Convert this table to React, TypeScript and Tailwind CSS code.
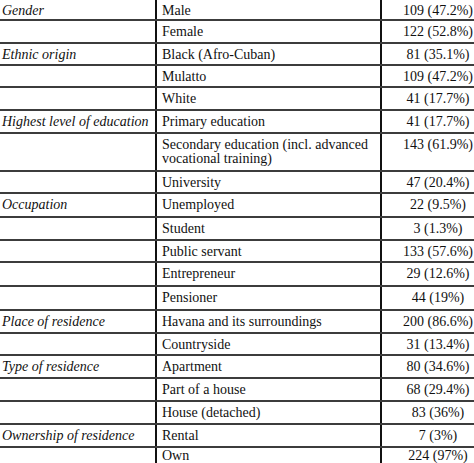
import React from "react";

type Row = { label?: string; cat: string; cat2?: string; value: string; h: string; pt?: string };

const rows: Row[] = [
  { label: "Gender", cat: "Male", value: "109 (47.2%)", h: "h-[21px]" },
  { cat: "Female", value: "122 (52.8%)", h: "h-[23px]" },
  { label: "Ethnic origin", cat: "Black (Afro-Cuban)", value: "81 (35.1%)", h: "h-[22px]" },
  { cat: "Mulatto", value: "109 (47.2%)", h: "h-[22px]" },
  { cat: "White", value: "41 (17.7%)", h: "h-[23px]" },
  { label: "Highest level of education", cat: "Primary education", value: "41 (17.7%)", h: "h-[23px]" },
  { cat: "Secondary education (incl. advanced", cat2: "vocational training)", value: "143 (61.9%)", h: "h-[38px]" },
  { cat: "University", value: "47 (20.4%)", h: "h-[22px]" },
  { label: "Occupation", cat: "Unemployed", value: "22 (9.5%)", h: "h-[24px]" },
  { cat: "Student", value: "3 (1.3%)", h: "h-[23px]" },
  { cat: "Public servant", value: "133 (57.6%)", h: "h-[22px]" },
  { cat: "Entrepreneur", value: "29 (12.6%)", h: "h-[24px]" },
  { cat: "Pensioner", value: "44 (19%)", h: "h-[24px]" },
  { label: "Place of residence", cat: "Havana and its surroundings", value: "200 (86.6%)", h: "h-[23px]" },
  { cat: "Countryside", value: "31 (13.4%)", h: "h-[22px]" },
  { label: "Type of residence", cat: "Apartment", value: "80 (34.6%)", h: "h-[23px]" },
  { cat: "Part of a house", value: "68 (29.4%)", h: "h-[23px]" },
  { cat: "House (detached)", value: "83 (36%)", h: "h-[23px]" },
  { label: "Ownership of residence", cat: "Rental", value: "7 (3%)", h: "h-[23px]" },
  { cat: "Own", value: "224 (97%)", h: "h-[23px]", pt: "pt-[1px]" },
];

export default function App() {
  return (
    <div
      className="w-[474px] h-[463px] overflow-hidden bg-white text-[#111] text-[14px] leading-[14px]"
      style={{ fontFamily: '"Liberation Serif", "Times New Roman", serif' }}
    >
      <div className="w-[494px] flex flex-col">
        {rows.map((r, i) => {
          const pt = r.pt ?? "pt-[4px]";
          return (
            <div key={i} className={`flex shrink-0 border-b-2 border-[#3c3c3c] ${r.h}`}>
              <div className={`w-[157px] shrink-0 border-r-2 border-[#111] pl-[2px] italic whitespace-nowrap ${pt}`}>
                {r.label ?? ""}
              </div>
              <div className={`w-[225px] shrink-0 border-r-2 border-[#111] pl-[5px] whitespace-nowrap ${pt}`}>
                <div>{r.cat}</div>
                {r.cat2 ? <div>{r.cat2}</div> : null}
              </div>
              <div className={`w-[112px] shrink-0 text-center whitespace-nowrap ${pt}`}>{r.value}</div>
            </div>
          );
        })}
      </div>
    </div>
  );
}
